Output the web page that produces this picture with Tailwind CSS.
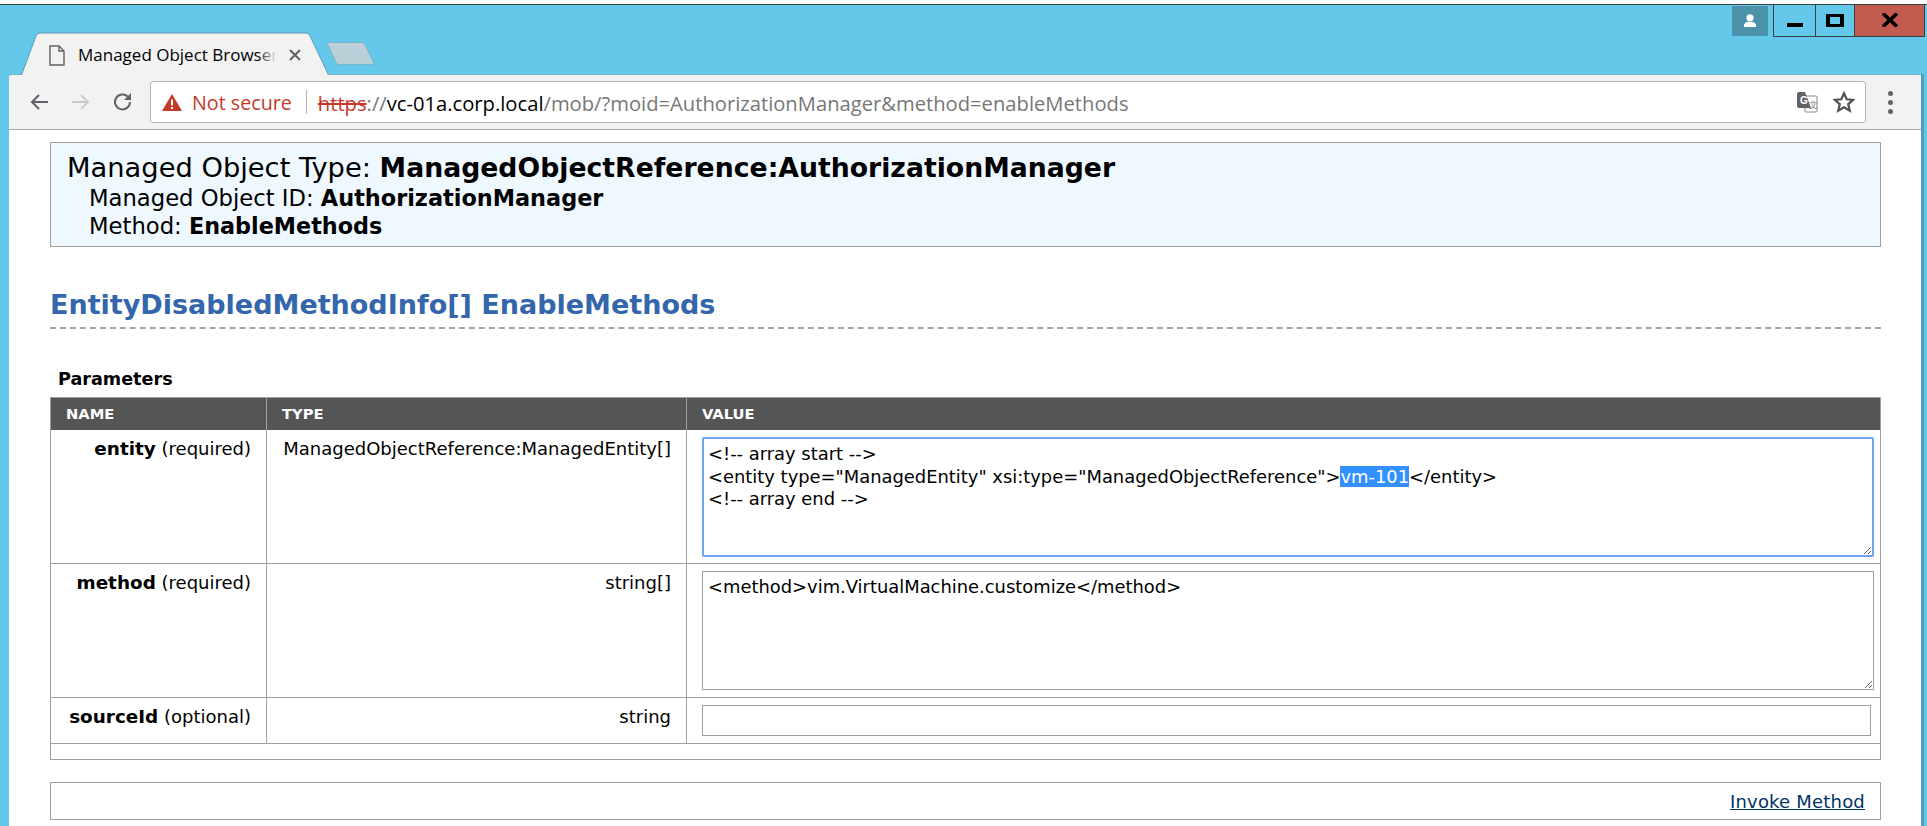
<!DOCTYPE html>
<html><head><meta charset="utf-8"><script src="https://cdn.jsdelivr.net/npm/@tailwindcss/browser@4"></script><title>Managed Object Browser</title></head>
<body class="bg-white">
<div class="w-[1927px] h-[826px] overflow-hidden flex flex-col font-['DejaVu_Sans',sans-serif] text-black">
  <div class="h-[4px] bg-white shrink-0"></div>
  <div class="flex-1 flex flex-col min-h-0 border-t border-[#3a3f42] bg-[#63c8ea]">
    <!-- title bar -->
    <div class="h-[69px] shrink-0 flex justify-between relative">
      <div class="flex items-end pl-[21px]">
        <div class="relative w-[308px] h-[43px] mb-[-1px] z-10">
          <svg class="absolute inset-0" width="308" height="43" viewBox="0 0 308 43"><path d="M0.5 43 L15 4 Q16 1 19 1 L285 1 Q288 1 289 4 L307.5 43" fill="#f2f2f2" stroke="#5a9db6"/></svg>
          <div class="relative h-[43px] flex items-center pl-[28px] pt-[3px]">
            <svg width="16" height="21" viewBox="0 0 16 21" fill="none" stroke="#5f6368" stroke-width="1.4"><path d="M1 1 H10 L15 6 V20 H1 Z M10 1 V6 H15"/></svg>
            <div class="relative ml-[13px] w-[199px] overflow-hidden whitespace-nowrap font-['Open_Sans',sans-serif] text-[17px] leading-[20px]">Managed Object Browser<div class="absolute right-0 top-0 h-full w-[20px] bg-gradient-to-r from-transparent to-[#f2f2f2]"></div></div>
            <svg class="ml-[12px]" width="12" height="12" viewBox="0 0 12 12" stroke="#5f6368" stroke-width="2"><path d="M1 1 L11 11 M11 1 L1 11"/></svg>
          </div>
        </div>
        <svg class="ml-[-3px] mb-[8px]" width="50" height="25" viewBox="0 0 50 25"><path d="M1 1.5 H36 Q38 1.5 39 3.5 L48.5 23.5 H13 Q11 23.5 10 21.5 Z" fill="#bacfd8" stroke="#78b6cc"/></svg>
      </div>
      <div class="flex items-start">
        <div class="w-[36px] h-[30px] mt-[1px] mr-[5px] bg-[#4b92aa] flex items-center justify-center">
          <svg width="14" height="14" viewBox="0 0 14 14" fill="#fff"><circle cx="7" cy="3.8" r="3.6"/><path d="M1 13 V11.5 Q1 9 4 8 H10 Q13 9 13 11.5 V13 Z"/></svg>
        </div>
        <div class="flex h-[32px] mr-[2px] border border-t-0 border-[#3a3f42]">
          <div class="w-[42px] flex items-end justify-center pb-[9px] border-r border-[#3a3f42]"><div class="w-[16px] h-[4px] bg-black"></div></div>
          <div class="w-[39px] flex items-start justify-center pt-[9px] border-r border-[#3a3f42]"><div class="w-[18px] h-[13px] border-x-[4px] border-y-[3px] border-black"></div></div>
          <div class="w-[69px] bg-[#c25b50] flex items-start justify-center pt-[8px]">
            <svg width="16" height="14" viewBox="0 0 16 14" stroke="#000" stroke-width="3.6"><path d="M1 0.5 L15 13.5 M15 0.5 L1 13.5"/></svg>
          </div>
        </div>
      </div>
    </div>
    <!-- browser body -->
    <div class="flex-1 min-h-0 ml-[9px] mr-[3px] border-r-[3px] border-[#4e9fba] flex flex-col">
      <div class="h-[56px] shrink-0 bg-[#f2f2f2] rounded-tl-[3px] border-b border-[#ababab] border-t border-t-[#7fb4c6] flex items-center relative">
        <svg class="ml-[21px]" width="18" height="18" viewBox="0 0 18 18" fill="none" stroke="#5f6368" stroke-width="2"><path d="M18 9 H2 M9 2 L2 9 L9 16"/></svg>
        <svg class="ml-[24px]" width="18" height="18" viewBox="0 0 18 18" fill="none" stroke="#c9cbcd" stroke-width="2"><path d="M0 9 H16 M9 2 L16 9 L9 16"/></svg>
        <svg class="ml-[23px]" width="20" height="20" viewBox="0 0 20 20" fill="none" stroke="#5f6368" stroke-width="2"><path d="M17 10 A7.5 7.5 0 1 1 14.8 4.6"/><path d="M18 1 V8 H11 Z" fill="#5f6368" stroke="none"/></svg>
        <div class="ml-[17px] w-[1716px] h-[42px] bg-white border border-[#b5b5b5] rounded-[3px] flex items-center">
          <svg class="ml-[11px]" width="20" height="17" viewBox="0 0 20 17"><path d="M10 0 L20 17 H0 Z" fill="#c5392b"/><rect x="9" y="5.5" width="2" height="6" fill="#fff"/><rect x="9" y="13" width="2" height="2" fill="#fff"/></svg>
          <span class="ml-[10px] pt-[2px] text-[#c5392b] font-['Open_Sans',sans-serif] text-[19.7px] whitespace-nowrap">Not secure</span>
          <div class="ml-[14px] w-px h-[24px] bg-[#b5b5b5]"></div>
          <span class="ml-[11px] pt-[2px] font-['Open_Sans',sans-serif] text-[20.2px] text-[#777] whitespace-nowrap"><span class="text-[#c5392b] line-through">https</span>://<span class="text-black">vc-01a.corp.local</span>/mob/?moid=AuthorizationManager&amp;method=enableMethods</span>
          <div class="ml-auto flex items-center mr-[10px]">
            <svg width="22" height="22" viewBox="0 0 22 22"><rect x="9" y="5" width="12" height="16" rx="1" fill="#fff" stroke="#888"/><path d="M1 3 Q1 1 3 1 H9 L15 17 H3 Q1 17 1 15 Z" fill="#5f6368"/><text x="4" y="13" font-size="10" font-weight="700" fill="#fff" font-family="Liberation Sans">G</text><text x="13" y="17" font-size="9" fill="#777" font-family="Liberation Sans">文</text></svg>
            <svg class="ml-[15px]" width="22" height="22" viewBox="0 0 24 24" fill="none" stroke="#4f5356" stroke-width="2.4"><path d="M12 2.5 L14.9 9 L22 9.7 L16.6 14.4 L18.3 21.4 L12 17.7 L5.7 21.4 L7.4 14.4 L2 9.7 L9.1 9 Z" stroke-linejoin="miter"/></svg>
          </div>
        </div>
        <div class="ml-[22px] flex flex-col gap-[4px]"><div class="w-[5px] h-[5px] rounded-full bg-[#5f6368]"></div><div class="w-[5px] h-[5px] rounded-full bg-[#5f6368]"></div><div class="w-[5px] h-[5px] rounded-full bg-[#5f6368]"></div></div>
      </div>
      <!-- page -->
      <div class="flex-1 min-h-0 bg-white pl-[41px] pr-[40px] pt-[12px] overflow-hidden">
        <div class="h-[105px] bg-[#eff7ff] border border-[#a0a0a0] pl-[16px] pt-[8px]">
          <div class="text-[27.3px] leading-[33px] whitespace-nowrap">Managed Object Type: <b class="font-bold text-[26.7px]">ManagedObjectReference:AuthorizationManager</b></div>
          <div class="pl-[22px] text-[22.7px] leading-[28px] whitespace-nowrap">Managed Object ID: <b class="font-bold text-[22.4px]">AuthorizationManager</b></div>
          <div class="pl-[22px] text-[22.7px] leading-[28px] whitespace-nowrap">Method: <b class="font-bold text-[22.3px]">EnableMethods</b></div>
        </div>
        <h1 class="mt-[37px] h-[45px] text-[27px] leading-[42px] font-bold text-[#3366aa] border-b-2 border-dashed border-[#99aaaa]">EntityDisabledMethodInfo[] EnableMethods</h1>
        <div class="mt-[40px] pl-[8px] text-[17.6px] leading-[20px] font-bold">Parameters</div>
        <div class="mt-[8px] border border-[#a0a0a0] h-[363px] flex flex-col">
          <div class="grid grid-cols-[216px_420px_1fr] h-[32px] bg-[#555] text-white text-[14.7px] font-bold leading-[32px]">
            <div class="pl-[15px] border-r border-[#a0a0a0]">NAME</div>
            <div class="pl-[15px] border-r border-[#a0a0a0]">TYPE</div>
            <div class="pl-[15px]">VALUE</div>
          </div>
          <div class="grid grid-cols-[216px_420px_1fr] h-[134px] border-b border-[#a0a0a0] text-[18px] leading-[22px]">
            <div class="pr-[15px] pt-[8px] text-right border-r border-[#a0a0a0] whitespace-nowrap"><b class="text-[18.4px]">entity</b> (required)</div>
            <div class="pr-[15px] pl-[15px] pt-[8px] text-right border-r border-[#a0a0a0] whitespace-nowrap">ManagedObjectReference:ManagedEntity[]</div>
            <div class="pl-[15px] pr-[6px] pt-[7px]">
              <div class="h-[120px] overflow-hidden resize border-2 border-[#6fa3f5] rounded-[2px] pl-[4px] pt-[4px] whitespace-pre text-[17.9px] leading-[22.6px]">&lt;!-- array start --&gt;
&lt;entity type="ManagedEntity" xsi:type="ManagedObjectReference"&gt;<span class="bg-[#3390ff] text-white">vm-101</span>&lt;/entity&gt;
&lt;!-- array end --&gt;</div>
            </div>
          </div>
          <div class="grid grid-cols-[216px_420px_1fr] h-[134px] border-b border-[#a0a0a0] text-[18px] leading-[22px]">
            <div class="pr-[15px] pt-[8px] text-right border-r border-[#a0a0a0] whitespace-nowrap"><b class="text-[18.4px]">method</b> (required)</div>
            <div class="pr-[15px] pt-[8px] text-right border-r border-[#a0a0a0]">string[]</div>
            <div class="pl-[15px] pr-[6px] pt-[7px]">
              <textarea readonly class="block w-full h-[119px] resize border border-[#a0a0a0] pl-[5px] pt-[4px] outline-none text-[17.9px]">&lt;method&gt;vim.VirtualMachine.customize&lt;/method&gt;</textarea>
            </div>
          </div>
          <div class="grid grid-cols-[216px_420px_1fr] h-[46px] border-b border-[#a0a0a0] text-[18px] leading-[22px]">
            <div class="pr-[15px] pt-[8px] text-right border-r border-[#a0a0a0] whitespace-nowrap"><b class="text-[18.4px]">sourceId</b> (optional)</div>
            <div class="pr-[15px] pt-[8px] text-right border-r border-[#a0a0a0]">string</div>
            <div class="pl-[15px] pr-[9px] pt-[7px]"><input readonly class="block w-full h-[31px] border border-[#a0a0a0] outline-none"></div>
          </div>
        </div>
        <div class="mt-[22px] h-[38px] border border-[#a0a0a0] flex items-center justify-end pr-[15px] text-[18px] tracking-[0.2px]">
          <a href="#" class="text-[#003366] underline">Invoke Method</a>
        </div>
      </div>
    </div>
  </div>
</div>
</body></html>
